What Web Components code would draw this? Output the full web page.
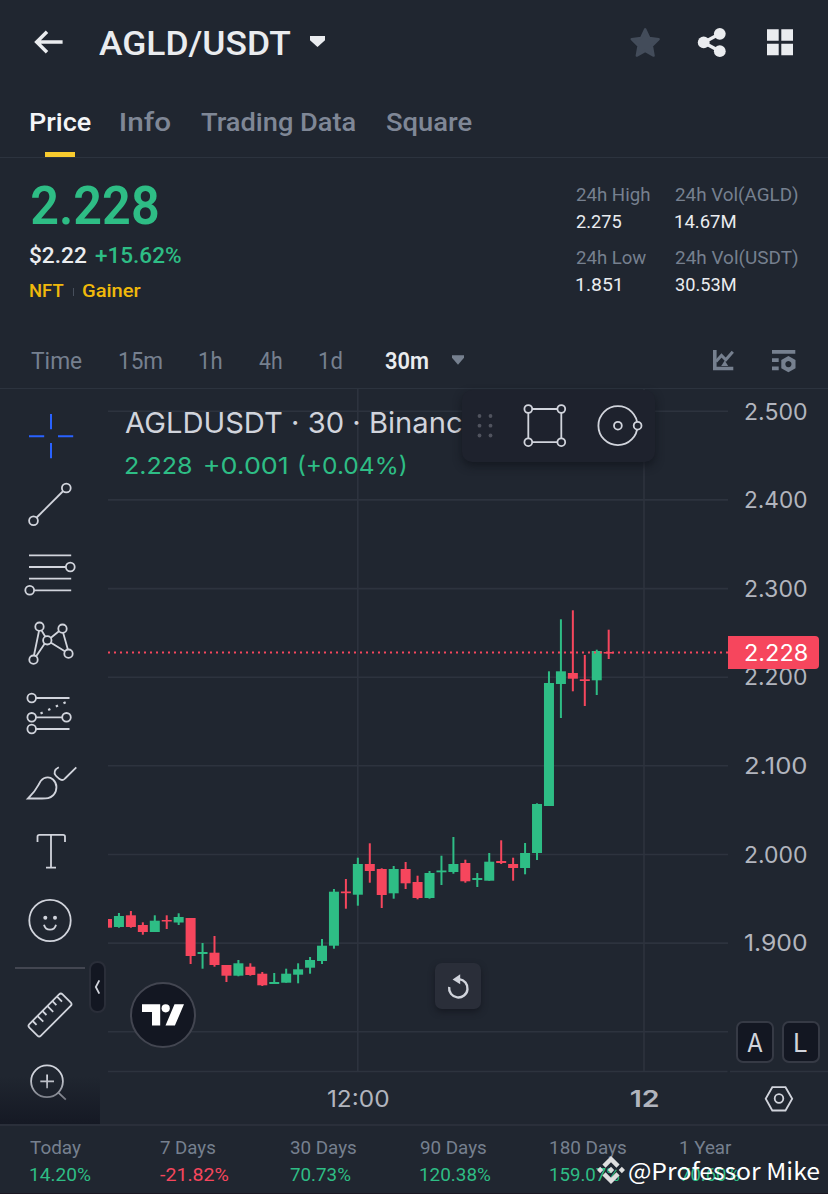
<!DOCTYPE html>
<html lang="en">
<head>
<meta charset="utf-8">
<title>AGLD/USDT</title>
<style>
    html, body {
        margin: 0;
        background: #202630;
    }

    body {
        width: 828px;
        height: 1194px;
        overflow: hidden;
        font-family: Roboto, "Liberation Sans", sans-serif;
        color: #eaecef;
    }
</style>
</head>
<body>
<trade-page>
    <pair-header>AGLD/USDT</pair-header>
    <tab-bar></tab-bar>
    <ticker-panel></ticker-panel>
    <interval-bar></interval-bar>
    <chart-view>
        <drawing-tools slot="tools"></drawing-tools>
        <price-plot slot="plot"></price-plot>
        <price-axis slot="prices"></price-axis>
        <time-axis slot="times"></time-axis>
    </chart-view>
    <period-stats></period-stats>
    <author-mark>@Professor Mike</author-mark>
</trade-page>

<script>
// name: [viewBox, markup]
const ICONS = {
    back: ['34 28 30 28', '<path d="M47 31.8 36.7 42 47 52.2M37 42H62.6" stroke="#eaecef" stroke-width="3.5"/>'],
    caret: ['311 35 16 14', '<path d="M311 36h15v4.2L318.5 47 311 40.2z" fill="#eaecef" stroke="none"/>'],
    star: ['630 27 31 31', '<path d="M645.2 29.3 649.3 37.9 658.7 39.2 651.9 46 653.6 55.6 645.2 51 636.8 55.6 638.5 46 631.7 39.2 641.1 37.9z" fill="#434c5a" stroke="#434c5a" stroke-width="2.4" stroke-linejoin="round"/>'],
    share: ['697 27 30 31', '<path d="M719.8 33.8 703.7 42.4 719.8 51.2" stroke="#eaecef" stroke-width="3.4"/><g fill="#eaecef" stroke="none"><circle cx="719.8" cy="33.8" r="5.9"/><circle cx="703.7" cy="42.4" r="5.9"/><circle cx="719.8" cy="51.2" r="5.9"/></g>'],
    grid: ['766 28 28 29', '<path d="M767 29.3h11.7v11.4H767zM781.3 29.3H793v11.4h-11.7zM767 43.8h11.7v11.4H767zM781.3 43.8H793v11.4h-11.7z" fill="#eaecef" stroke="none"/>'],
    smallcaret: ['452 350 14 22', '<path d="M452 355.3h12v2.4l-6 7-6-7z" fill="#76808f" stroke="none"/>'],
    indicator: ['713 348 22 26', '<path d="M714 350h3.6v16.7H734.3v3.6H714z" fill="#76808f" stroke="none"/><path d="m717 361.500 5.500-6 4.300 4.200 7-8" stroke="#76808f" stroke-width="3"/><path d="m725.700 360.500 3.500 5.500h-7z" fill="#76808f" stroke="none"/>'],
    settings: ['771 348 26 26', '<g fill="#76808f" stroke="none"><path d="M772 350h23.300v3.800H772zM772 358.300h6.700v3.800H772zM772 366.500h6.700v3.700H772z"/><path d="m788.400 356 7.100 4v8.200l-7.100 4.100-7.100-4.100V360zM788.400 361a3.100 3.100 0 1 0 .010 0z" fill-rule="evenodd"/></g>'],
    cross: ['16 402 68 69', '<path d="M51 414v15.300M51 443v15.300M29 436.200h15.200M58 436.200h15.200" stroke="#2962ff" stroke-width="2"/>'],
    trend: ['16 471 68 69', '<path d="M36.700 517.500 63.200 491"/><circle cx="33.500" cy="520.700" r="4.400"/><circle cx="66.300" cy="488" r="4.400"/>'],
    fib: ['16 540 68 69', '<path d="M29 555.300H71.200M29 567H66M29 578.700H71.200M34 590.300H71.200"/><circle cx="70.300" cy="567" r="4.400"/><circle cx="29.700" cy="590.300" r="4.400"/>'],
    pattern: ['16 609 68 69', '<path d="M39 631 34 655.300M41.600 630.500 45.200 636.500M58.900 631.200 50.900 637.700M63.200 633 67.800 649.300M51 642.700 64.800 651.300M44.600 643.800 36.200 656.200"/><circle cx="39.500" cy="626.700" r="4.200"/><circle cx="62.500" cy="628.700" r="4.200"/><circle cx="47.300" cy="640.300" r="4.200"/><circle cx="68.500" cy="653.700" r="4.200"/><circle cx="33.500" cy="659.700" r="4.200"/>'],
    forecast: ['16 678 68 69', '<path d="M36 698H69.500M36 717.300H62M36 729H69.500"/><path d="M40.500 713.500 66 702" stroke-width="2.200" stroke-dasharray="2.400 6"/><circle cx="31.700" cy="698" r="4.300"/><circle cx="31.700" cy="717.300" r="4.300"/><circle cx="66.500" cy="717.300" r="4.300"/><circle cx="31.700" cy="729" r="4.300"/>'],
    brush: ['16 747 68 69', '<path d="M28 798.500C36 791 37 787.500 39.500 783 42.500 777 49 776 53 779.500 57.500 783.500 57.500 790.500 53.500 795 50 798.500 46.500 798.500 42 798.500zM58.800 767.300C54.500 769.500 53.500 773 55.700 775.500 57 777 58 777.700 59.200 778.800 61 780.300 63.300 780.300 65 778.500L76.300 767.300"/>'],
    type: ['16 816 68 69', '<path d="M37.500 842v-5.200q0-1.900 1.900-1.900H63.100q1.900 0 1.900 1.900V842M51 835V867.700M46 867.700H56"/>'],
    smile: ['16 885 68 69', '<circle cx="50" cy="920.500" r="20.700"/><path d="M44 924.800C45.500 931.300 54.500 931.300 56 924.800"/><g fill="#d1d4dc" stroke="none"><circle cx="45.300" cy="917.700" r="2"/><circle cx="55" cy="917.700" r="2"/></g>'],
    ruler: ['16 981 68 69', '<g transform="translate(50 1015) rotate(-45)"><rect x="-23.500" y="-8.200" width="47" height="16.400" rx="2.500"/><path d="M-16.500-8v5.500M-9.500-8v8M-2.500-8v5.500M4.500-8v8M11.500-8v5.500M18-8v7"/></g>'],
    zoom: ['16 1050 68 69', '<circle cx="47" cy="1081.300" r="15.900"/><path d="M40.300 1081.300H54M47.100 1074.500V1088.200M58.600 1092.800 65.800 1099.700"/>'],
    less: ['93 979 8 16', '<path d="M99.300 980.300 95.800 987l3.500 6.700"/>'],
    grip: ['474 410 24 32', '<g fill="#50535e" stroke="none"><circle cx="479.500" cy="416" r="1.900"/><circle cx="490.500" cy="416" r="1.900"/><circle cx="479.500" cy="425.700" r="1.900"/><circle cx="490.500" cy="425.700" r="1.900"/><circle cx="479.500" cy="435.500" r="1.900"/><circle cx="490.500" cy="435.500" r="1.900"/></g>'],
    rect: ['522 402 46 48', '<path d="M532 409H557.500M532 442.200H557.500M528.300 413V438M561.300 413V438"/><circle cx="528.300" cy="409" r="3.900"/><circle cx="561.300" cy="409" r="3.900"/><circle cx="528.300" cy="442.200" r="3.900"/><circle cx="561.300" cy="442.200" r="3.900"/>'],
    circle: ['596 402 48 48', '<circle cx="617.900" cy="425.700" r="19.500"/><circle cx="617.900" cy="425.700" r="3.900"/><circle cx="637.600" cy="425.700" r="3.900" fill="#1e222d"/>'],
    reset: ['446 972 24 28', '<path d="M459.200 979.100A9.200 9.200 0 1 1 449.200 987" stroke-width="2.400"/><path d="M452.600 979.600 460.200 974.300V984.300z" fill="#d1d4dc" stroke="none"/>'],
    hex: ['764 1084 30 30', '<path d="M765.700 1098.800 772.300 1087.200H785.500L792.200 1098.800 785.500 1110.500H772.300z"/><circle cx="779" cy="1098.500" r="4.300"/>'],
    tv: ['140 1003 46 26', '<path d="M142 1005.200H160.200V1026.600H152V1013H142zM174.500 1005.200H184L174.900 1026.600H165.500z" fill="#fff" stroke="none"/><circle cx="165.700" cy="1009.300" r="4.100" fill="#fff" stroke="none"/>'],
    binance: ['0 0 126.61 126.61', '<path d="M38.730 53.200 63.320 28.620 87.920 53.220 102.220 38.910 63.320 0 24.420 38.900zM0 63.310 14.300 49 28.610 63.310 14.300 77.610zM38.730 73.410 63.320 98 87.920 73.400 102.230 87.690 63.330 126.600 24.420 87.720zM98 63.310 112.300 49 126.610 63.300 112.300 77.620zM77.830 63.300 63.320 48.780 48.810 63.280 63.320 77.800z" fill="#dedede" stroke="none"/>']
};

// one array per 30 minute candle: up, body top, body bottom, high, low
const CANDLES = [
    [0, 919, 927.7, 919, 931], [1, 916, 927, 913, 927.7], [0, 915.3, 927, 911, 927.7],
    [0, 925, 932, 922.3, 934.7], [1, 920.7, 932, 915.3, 932], [0, 920, 921.5, 915.3, 929],
    [1, 917, 922.5, 913.3, 925], [0, 918, 956, 918, 964], [1, 952, 954, 943, 968.7],
    [0, 952.7, 965, 936, 966.7], [0, 965, 975.7, 965, 982], [1, 963.3, 975.7, 960, 976.3],
    [0, 966.7, 975, 963.3, 975.7], [0, 973.7, 985.3, 972, 986], [1, 982, 984, 973, 984],
    [1, 973.7, 982.7, 968.7, 982.7], [1, 969.3, 974.7, 963.3, 983.3], [1, 960, 967.7, 957, 973.7],
    [1, 945.7, 961, 939, 964], [1, 891.7, 945.7, 889, 948.7], [0, 891.5, 893.2, 879, 908.7],
    [1, 864, 894.7, 857.7, 905.7], [0, 864, 871, 843.3, 882.7], [0, 869, 895, 868.3, 908],
    [1, 869, 893.3, 866, 898.7], [0, 869, 883.3, 862, 889], [0, 882, 898, 875.7, 899.3],
    [1, 873, 898, 871, 898.7], [1, 870.5, 872.3, 855.7, 885], [1, 864, 872, 837, 873.7],
    [0, 863, 881.3, 859.7, 882.7], [1, 878, 880, 873, 887], [1, 861.7, 880.7, 853, 880.7],
    [0, 861, 863, 840.3, 864], [0, 864, 868, 857.7, 880.7], [1, 853, 868, 843, 874.3],
    [1, 804, 853, 803.3, 860], [1, 683, 806, 671.3, 806], [1, 671.3, 684, 619.3, 718],
    [0, 673, 678.7, 610.3, 691.3], [0, 679.3, 681, 655, 706], [1, 651, 680.3, 649.7, 695],
    [0, 652, 653.5, 629.7, 659]
];

const PERIODS = [
    ['Today', 51, '14.20%', 61], ['7 Days', 55, '-21.82%', 69], ['30 Days', 66, '70.73%', 61],
    ['90 Days', 66, '120.38%', 71], ['180 Days', 76, '159.07%', 70], ['1 Year', 52, '70.60%', 60]
];

function define(name, html) {
    customElements.define(name, class extends HTMLElement {
        constructor() {
            super();
            const template = document.createElement('template');
            template.innerHTML = html;
            this.attachShadow({mode: 'open'});
            this.shadowRoot.appendChild(template.content.cloneNode(true));
        }
    });
}

define('trade-page', `
    <style>
        :host {
            display: flex;
            flex-direction: column;
            position: relative;
            width: 828px;
            height: 1194px;
            overflow: hidden;
        }
    </style>
    <slot></slot>`);

define('pair-header', `
    <style>
        :host {
            display: flex;
            align-items: center;
            box-sizing: border-box;
            height: 86px;
            padding: 0 34px;
            font-size: 34px;
            font-weight: 500;
        }

        fit-text {
            margin: 0 20px 0 35px;
        }

        ui-icon {
            margin-bottom: 2px;
        }

        .actions {
            display: flex;
            align-items: center;
            gap: 37px;
            margin-left: auto;
        }

        .actions :first-child {
            margin-right: -1px;
        }

        .actions :last-child {
            margin-left: 2px;
        }
    </style>
    <ui-icon name="back"></ui-icon>
    <fit-text w="191"><slot></slot></fit-text>
    <ui-icon name="caret"></ui-icon>
    <div class="actions">
        <ui-icon name="star"></ui-icon>
        <ui-icon name="share"></ui-icon>
        <ui-icon name="grid"></ui-icon>
    </div>`);

define('tab-bar', `
    <style>
        :host {
            display: flex;
            align-items: center;
            gap: 30px;
            box-sizing: border-box;
            height: 72px;
            padding-left: 30px;
            border-bottom: 1px solid #2c333e;
            font-size: 26.500px;
            font-weight: 500;
            color: #7f8796;
        }

        .active {
            position: relative;
            color: #f4f5f7;
        }

        .active::after {
            content: '';
            position: absolute;
            left: 15px;
            top: 46px;
            width: 30px;
            height: 5px;
            background: #f8cb2e;
        }
    </style>
    <fit-text w="61" class="active">Price</fit-text>
    <fit-text w="50">Info</fit-text>
    <fit-text w="155">Trading Data</fit-text>
    <fit-text w="86">Square</fit-text>`);

define('ticker-panel', `
    <style>
        :host {
            display: flex;
            justify-content: space-between;
            box-sizing: border-box;
            height: 177px;
            padding: 17px 30px 0 30px;
        }

        .row {
            display: flex;
        }

        .price {
            margin-left: 2px;
            font-size: 54px;
            font-weight: 600;
            line-height: 62px;
            color: #2ebd85;
        }

        .change {
            gap: 9px;
            font-size: 22.500px;
            font-weight: 500;
            line-height: 36px;
        }

        .up {
            color: #2ebd85;
        }

        .tags {
            align-items: center;
            gap: 9px;
            font-size: 19px;
            font-weight: 500;
            line-height: 35px;
            color: #f0b90b;
        }

        .tags i {
            width: 1px;
            height: 8px;
            margin-top: 3px;
            background: #474f5c;
        }

        .day {
            display: grid;
            grid-template-columns: 99px 123px;
            grid-template-rows: 27px 36px 27px 27px;
            padding-top: 6px;
            font-size: 19px;
            line-height: 27px;
        }

        .day .name {
            color: #76808f;
        }
    </style>
    <div>
        <fit-text w="126" class="price">2.228</fit-text>
        <div class="row change">
            <fit-text w="56">$2.22</fit-text>
            <fit-text w="86" class="up">+15.62%</fit-text>
        </div>
        <div class="row tags">
            <fit-text w="34">NFT</fit-text><i></i><fit-text w="58">Gainer</fit-text>
        </div>
    </div>
    <div class="day">
        <fit-text w="74" class="name">24h High</fit-text>
        <fit-text w="123" class="name">24h Vol(AGLD)</fit-text>
        <fit-text w="45">2.275</fit-text>
        <fit-text w="61">14.67M</fit-text>
        <fit-text w="70" class="name">24h Low</fit-text>
        <fit-text w="123" class="name">24h Vol(USDT)</fit-text>
        <fit-text w="44">1.851</fit-text>
        <fit-text w="61">30.53M</fit-text>
    </div>`);

define('interval-bar', `
    <style>
        :host {
            display: flex;
            align-items: center;
            gap: 37px;
            box-sizing: border-box;
            height: 54px;
            padding: 0 31px;
            border-bottom: 1px solid #2c333e;
            font-size: 23px;
            color: #76808f;
        }

        ui-icon {
            margin-bottom: 2px;
        }

        .active {
            margin-left: 6px;
            font-weight: 600;
            color: #eaecef;
        }

        .more {
            margin-left: -13px;
        }

        .push {
            margin-left: auto;
        }
    </style>
    <fit-text w="51">Time</fit-text>
    <fit-text w="43">15m</fit-text>
    <fit-text w="23">1h</fit-text>
    <fit-text w="23">4h</fit-text>
    <fit-text w="23">1d</fit-text>
    <fit-text w="43" class="active">30m</fit-text>
    <ui-icon name="smallcaret" class="more"></ui-icon>
    <ui-icon name="indicator" class="push"></ui-icon>
    <ui-icon name="settings"></ui-icon>`);

define('chart-view', `
    <style>
        :host {
            display: grid;
            grid-template-columns: 108px 620px 100px;
            grid-template-rows: 683px 52px;
            position: relative;
            height: 735px;
            font-family: Inter, "Liberation Sans", sans-serif;
            color: #b2b5be;
        }

        ::slotted([slot=tools]) {
            grid-row: 1 / 3;
        }

        ::slotted([slot=times]) {
            grid-column: 2 / 4;
        }

        .legend {
            position: absolute;
            left: 125px;
            top: 12px;
            font-size: 29px;
            line-height: 43px;
            color: #d1d4dc;
        }

        .legend div {
            display: flex;
            font-size: 23.500px;
            color: #2ebd85;
        }

        .shapes {
            display: flex;
            align-items: center;
            position: absolute;
            left: 462px;
            top: 1px;
            box-sizing: border-box;
            width: 193px;
            height: 72px;
            padding: 0 12px;
            gap: 24px;
            border-radius: 10px;
            background: #1e222d;
            box-shadow: 0 4px 8px #12151dcc;
        }

        .shapes :last-child {
            margin-left: 4px;
        }

        .reset, .brand {
            display: flex;
            align-items: center;
            justify-content: center;
            position: absolute;
        }

        .reset {
            left: 435px;
            top: 574px;
            width: 46px;
            height: 46px;
            border-radius: 7px;
            background: #2a2e39;
            box-shadow: 0 3px 6px #14171fcc;
        }

        .brand {
            left: 130px;
            top: 593px;
            box-sizing: border-box;
            width: 66px;
            height: 66px;
            border: 2px solid #434651;
            border-radius: 50%;
            background: #131722;
        }
    </style>
    <slot name="tools"></slot>
    <slot name="plot"></slot>
    <slot name="prices"></slot>
    <slot name="times"></slot>
    <div class="legend">
        <fit-text w="337">AGLDUSDT · 30 · Binanc</fit-text>
        <div>
            <fit-text w="67">2.228</fit-text>
            <fit-text w="82" style="margin: 0 12px 0 13px">+0.001</fit-text>
            <fit-text w="107">(+0.04%)</fit-text>
        </div>
    </div>
    <div class="shapes">
        <ui-icon name="grip"></ui-icon>
        <ui-icon name="rect"></ui-icon>
        <ui-icon name="circle"></ui-icon>
    </div>
    <div class="brand"><ui-icon name="tv"></ui-icon></div>
    <div class="reset"><ui-icon name="reset"></ui-icon></div>`);

define('drawing-tools', `
    <style>
        :host {
            display: flex;
            flex-direction: column;
            align-items: center;
            position: relative;
            box-sizing: border-box;
            width: 100px;
            padding-top: 13px;
        }

        hr {
            width: 70px;
            height: 2px;
            margin: 13px 0 12px;
            border: 0;
            background: #434651;
        }

        .fade {
            position: absolute;
            left: 0;
            bottom: 0;
            width: 100px;
            height: 48px;
            background: linear-gradient(#15192400, #151924);
        }

        .handle {
            display: flex;
            align-items: center;
            justify-content: center;
            position: absolute;
            left: 89px;
            top: 572px;
            box-sizing: border-box;
            width: 17px;
            height: 52px;
            border: 2px solid #2a2e39;
            border-radius: 8px;
            background: #131722;
        }

        .handle ui-icon {
            margin-right: 1px;
        }
    </style>
    <ui-icon name="cross"></ui-icon>
    <ui-icon name="trend"></ui-icon>
    <ui-icon name="fib"></ui-icon>
    <ui-icon name="pattern"></ui-icon>
    <ui-icon name="forecast"></ui-icon>
    <ui-icon name="brush"></ui-icon>
    <ui-icon name="type"></ui-icon>
    <ui-icon name="smile"></ui-icon>
    <hr>
    <ui-icon name="ruler"></ui-icon>
    <ui-icon name="zoom"></ui-icon>
    <div class="fade"></div>
    <div class="handle"><ui-icon name="less"></ui-icon></div>`);

define('price-axis', `
    <style>
        :host {
            display: flex;
            flex-direction: column;
            position: relative;
            font-size: 23px;
        }

        .labels {
            display: flex;
            flex-direction: column;
            margin: -21.500px 0 0 17px;
            line-height: 88.630px;
        }

        .last {
            position: absolute;
            left: 0;
            top: 247px;
            box-sizing: border-box;
            width: 91px;
            height: 33px;
            padding-left: 17px;
            border-radius: 0 4px 4px 0;
            background: #f6465d;
            line-height: 34px;
            color: #fff;
        }

        .modes {
            display: flex;
            gap: 8px;
            margin: 33.500px 0 0 8px;
        }

        .modes div {
            display: flex;
            align-items: center;
            justify-content: center;
            box-sizing: border-box;
            width: 38px;
            height: 42px;
            border: 2px solid #363a45;
            border-radius: 7px;
            background: #131722;
            font-size: 26px;
            color: #d1d4dc;
        }
    </style>
    <div class="labels">
        <fit-text w="62">2.500</fit-text>
        <fit-text w="62">2.400</fit-text>
        <fit-text w="62">2.300</fit-text>
        <fit-text w="62">2.200</fit-text>
        <fit-text w="62">2.100</fit-text>
        <fit-text w="62">2.000</fit-text>
        <fit-text w="62">1.900</fit-text>
    </div>
    <div class="modes">
        <div><fit-text w="16">A</fit-text></div>
        <div><fit-text w="12">L</fit-text></div>
    </div>
    <div class="last"><fit-text w="62">2.228</fit-text></div>`);

define('time-axis', `
    <style>
        :host {
            display: flex;
            align-items: center;
            box-sizing: border-box;
            height: 52px;
            padding: 2px 0 0 220px;
            font-size: 23px;
        }

        b {
            margin: 0 106px 0 242px;
            font-weight: 600;
        }
    </style>
    <fit-text w="61">12:00</fit-text>
    <b><fit-text w="27">12</fit-text></b>
    <ui-icon name="hex"></ui-icon>`);

define('period-stats', `
    <style>
        :host {
            display: flex;
            box-sizing: border-box;
            height: 70px;
            padding: 8px 0 0 29.500px;
            border-top: 2px solid #2a2f3a;
            border-bottom: 1px solid #1b1822;
            font-size: 19px;
            line-height: 27px;
        }

        div {
            flex: 0 0 130px;
            color: #76808f;
        }

        .up {
            color: #2ebd85;
        }

        .down {
            color: #f6465d;
        }
    </style>
    ${PERIODS.map(([name, w, value, vw]) => `
    <div>
        <fit-text w="${w}">${name}</fit-text>
        <fit-text w="${vw}" class="${value[0] === '-' ? 'down' : 'up'}">${value}</fit-text>
    </div>`).join('')}`);

define('author-mark', `
    <style>
        :host {
            display: flex;
            align-items: center;
            gap: 4px;
            position: absolute;
            left: 597px;
            top: 1150px;
            height: 40px;
            font: 400 23.500px/38px "Noto Sans CJK SC", "Noto Sans", sans-serif;
            color: #fff;
        }
    </style>
    <ui-icon name="binance" size="28"></ui-icon>
    <fit-text w="191"><slot></slot></fit-text>`);

class PricePlot extends HTMLElement {
    constructor() {
        super();
        this.attachShadow({mode: 'open'});
    }

    connectedCallback() {
        let grid = '';
        for (let i = 0; i < 8; i++) {
            grid += `<path d="M108 ${(411.3 + 88.63 * i).toFixed(1)}H728"/>`;
        }
        let candles = '';
        CANDLES.forEach(([up, top, bottom, high, low], i) => {
            const x = 107 + 11.945 * i;
            candles += `<g fill="${up ? '#2ebd85' : '#f6465d'}">
                <rect x="${x - 1}" y="${high}" width="2" height="${low - high}"/>
                <rect x="${x - 5}" y="${top}" width="10" height="${bottom - top}"/></g>`;
        });
        this.shadowRoot.innerHTML = `
            <style>
                :host {
                    display: block;
                    height: 683px;
                }

                svg {
                    display: block;
                    overflow: visible;
                }
            </style>
            <svg width="620" height="683" viewBox="108 389 620 683">
                <clipPath id="area"><rect x="108" y="389" width="620" height="683"/></clipPath>
                <g stroke="#2d333e" stroke-width="1.6">
                    ${grid}
                    <path d="M357.800 389V1071M644 389V1071M108 1071.500H727.500M730 1071.500H828"/>
                </g>
                <g clip-path="url(#area)">${candles}</g>
                <path d="M108 652.500H728" stroke="#f6465d" stroke-width="1.800" stroke-dasharray="2 4"/>
            </svg>`;
    }
}

class UiIcon extends HTMLElement {
    constructor() {
        super();
        this.attachShadow({mode: 'open'});
    }

    connectedCallback() {
        const [box, markup] = ICONS[this.getAttribute('name')];
        const size = this.getAttribute('size');
        const [, , w, h] = box.split(' ');
        this.shadowRoot.innerHTML = `
            <style>
                :host {
                    display: block;
                    flex: none;
                }

                svg {
                    display: block;
                }
            </style>
            <svg width="${size || w}" height="${size || h}" viewBox="${box}">
                <g fill="none" stroke="#d1d4dc" stroke-width="1.8">${markup}</g>
            </svg>`;
    }
}

// Text scaled sideways so that its ink is exactly w pixels wide
class FitText extends HTMLElement {
    constructor() {
        super();
        this.attachShadow({mode: 'open'});
        this.shadowRoot.innerHTML = `
            <style>
                :host {
                    display: block;
                    flex: none;
                    white-space: nowrap;
                }

                span {
                    display: inline-block;
                    transform-origin: 0 50%;
                }
            </style>
            <span><slot></slot></span>`;
    }

    connectedCallback() {
        const width = Number(this.getAttribute('w'));
        const inner = this.querySelector('slot');
        const text = inner ? inner.assignedNodes().map(n => n.textContent).join('') : this.textContent;
        const style = getComputedStyle(this);
        const ctx = document.createElement('canvas').getContext('2d');
        ctx.font = `${style.fontWeight} ${style.fontSize} ${style.fontFamily}`;
        const m = ctx.measureText(text.trim());
        const scale = width / (m.actualBoundingBoxLeft + m.actualBoundingBoxRight);
        this.style.width = width + 'px';
        this.shadowRoot.querySelector('span').style.transform =
            `translateX(${m.actualBoundingBoxLeft * scale}px) scaleX(${scale})`;
    }
}

customElements.define('price-plot', PricePlot);
customElements.define('ui-icon', UiIcon);
customElements.define('fit-text', FitText);
</script>
</body>
</html>
